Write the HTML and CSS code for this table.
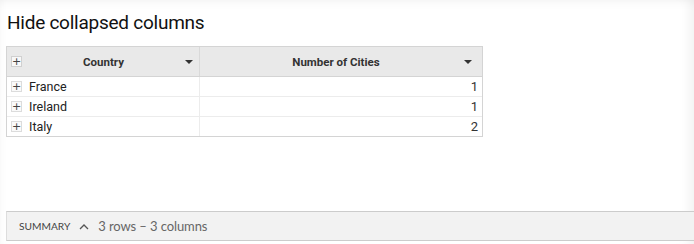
FILE: index.html
```html
<!DOCTYPE html>
<html>
<head>
<meta charset="utf-8">
<link rel="stylesheet" href="styles.css">
</head>
<body>
<div class="page">
  <h1 class="title">Hide collapsed columns</h1>
  <div class="grid">
    <div class="row head">
      <div class="cell c1">
        <span class="plus">+</span>
        <span class="htext">Country</span>
        <span class="tri"></span>
      </div>
      <div class="cell c2">
        <span class="htext">Number of Cities</span>
        <span class="tri"></span>
      </div>
    </div>
    <div class="row">
      <div class="cell c1"><span class="plus">+</span><span class="txt">France</span></div>
      <div class="cell c2 num">1</div>
    </div>
    <div class="row">
      <div class="cell c1"><span class="plus">+</span><span class="txt">Ireland</span></div>
      <div class="cell c2 num">1</div>
    </div>
    <div class="row last">
      <div class="cell c1"><span class="plus">+</span><span class="txt">Italy</span></div>
      <div class="cell c2 num">2</div>
    </div>
  </div>
  <div class="spacer"></div>
  <div class="summary">
    <span class="slabel">SUMMARY</span>
    <svg class="caret" width="10" height="7" viewBox="0 0 10 7"><path d="M1 6 L5 2 L9 6" fill="none" stroke="#555" stroke-width="1.3"/></svg>
    <span class="sinfo">3 rows – 3 columns</span>
  </div>
</div>
</body>
</html>
```
FILE: styles.css
```css
html, body {
  margin: 0;
  padding: 0;
  background: #fff;
}
.page {
  width: 694px;
  height: 244px;
  box-sizing: border-box;
  padding: 0 0 3px 6px;
  display: flex;
  flex-direction: column;
  box-shadow: inset 0 8px 10px -6px rgba(0,0,0,0.05), inset -12px 0 12px -8px rgba(0,0,0,0.06), inset 6px 0 8px -6px rgba(0,0,0,0.04);
}
.title {
  font-family: Roboto, "Noto Sans", sans-serif;
  font-weight: 400;
  font-size: 19px;
  letter-spacing: -0.25px;
  color: #111;
  margin: 11px 0 0 1px;
  line-height: 24px;
  height: 24px;
}
.grid {
  margin-top: 11px;
  width: 475px;
  border: 1px solid #d4d4d4;
  font-family: Roboto, "Liberation Sans", sans-serif;
  font-size: 12px;
  color: #222;
}
.row {
  display: flex;
  height: 19px;
  border-bottom: 1px solid #ececec;
}
.row.last {
  border-bottom: none;
}
.row.head {
  height: 29px;
  background: #e9e9e9;
  border-bottom: 1px solid #d4d4d4;
}
.cell {
  display: flex;
  align-items: center;
  box-sizing: border-box;
  position: relative;
}
.c1 {
  width: 193px;
  border-right: 1px solid #ececec;
  padding-left: 4px;
}
.head .c1 {
  border-right: 1px solid #d9d9d9;
}
.c2 {
  flex: 1;
  padding-right: 4px;
}
.num {
  justify-content: flex-end;
  font-size: 13px;
  color: #333;
}
.plus {
  width: 11px;
  height: 11px;
  box-sizing: border-box;
  border: 1px solid #dcdcdc;
  background: #fafafa;
  display: flex;
  align-items: center;
  justify-content: center;
  font-size: 11px;
  line-height: 1;
  color: #444;
  font-family: "DejaVu Sans", sans-serif;
}
.head .plus {
  background: #f8f8f8;
  border-color: #d0d0d0;
}
.txt {
  margin-left: 7px;
  font-size: 12.5px;
}
.htext {
  flex: 1;
  text-align: center;
  font-weight: 700;
  font-size: 11.5px;
  color: #333;
}
.c2 .htext {
  padding-left: 8px;
}
.tri {
  width: 0;
  height: 0;
  border-left: 4px solid transparent;
  border-right: 4px solid transparent;
  border-top: 4px solid #333;
  margin-right: 6px;
}
.spacer {
  flex: 1;
}
.summary {
  height: 28px;
  background: #f2f2f2;
  border-top: 1px solid #cccccc;
  border-bottom: 1px solid #cccccc;
  border-left: 1px solid #dddddd;
  display: flex;
  align-items: center;
  padding-left: 12px;
  font-family: Lato, "Noto Sans", sans-serif;
}
.slabel {
  font-size: 10.2px;
  color: #444;
}
.caret {
  margin-left: 9px;
  margin-right: 9px;
}
.sinfo {
  font-size: 13px;
  letter-spacing: -0.1px;
  color: #666;
}
```
